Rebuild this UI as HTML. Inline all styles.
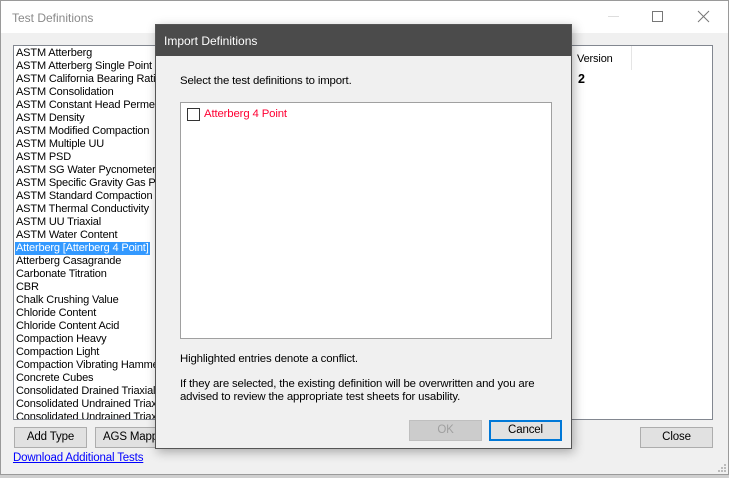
<!DOCTYPE html>
<html><head><meta charset="utf-8"><style>
*{margin:0;padding:0;box-sizing:border-box}
body{width:729px;height:478px;background:#cfcfcf;font-family:"Liberation Sans",sans-serif;font-size:11px;letter-spacing:-0.15px;position:relative;overflow:hidden;color:#000}
.abs{position:absolute}
#win{left:0;top:0;width:729px;height:475px;background:#f0f0f0;border:1px solid #9a9a9a}
#tb{left:0;top:0;width:727px;height:32px;background:#fff}
.btn{position:absolute;background:#e1e1e1;border:1px solid #adadad;text-align:center;line-height:18px;font-size:11.5px}
.list{background:#fff;border:1px solid #828790}
.item{position:absolute;left:2px;white-space:nowrap;line-height:13px;height:13px;font-size:11px}
.dt{font-size:11.4px}
</style></head><body>
<div id="win" class="abs">
 <div id="tb" class="abs"></div>
 <div class="abs" style="left:11px;top:10px;color:#8a8a8a;font-size:12px;letter-spacing:0">Test Definitions</div>
 <div class="abs" style="left:607px;top:15px;width:11px;height:1px;background:#ddd"></div>
 <div class="abs" style="left:651px;top:10px;width:11px;height:11px;border:1px solid #777"></div>
 <svg class="abs" style="left:696px;top:9px" width="13" height="13"><path d="M1 1L12 12M12 1L1 12" stroke="#777" stroke-width="1"/></svg>
 <div class="abs list" style="left:12px;top:44px;width:700px;height:375px"></div>
 <div class="abs" style="left:630px;top:45px;width:1px;height:24px;background:#e5e5e5"></div>
 <div class="abs" style="left:576px;top:52px">Version</div>
 <div class="abs" style="left:577px;top:71px;font-weight:bold;font-size:12.5px">2</div>
 <div class="abs" style="left:13px;top:45px;width:145px;height:373px;overflow:hidden">
  <div class="abs" style="left:1px;top:196px;width:135px;height:13px;background:#3399ff"></div>
  <div style="position:relative">
  <div class="item" style="top:1px">ASTM Atterberg</div>
  <div class="item" style="top:14px">ASTM Atterberg Single Point</div>
  <div class="item" style="top:27px">ASTM California Bearing Ratio</div>
  <div class="item" style="top:40px">ASTM Consolidation</div>
  <div class="item" style="top:53px">ASTM Constant Head Permeability</div>
  <div class="item" style="top:66px">ASTM Density</div>
  <div class="item" style="top:79px">ASTM Modified Compaction</div>
  <div class="item" style="top:92px">ASTM Multiple UU</div>
  <div class="item" style="top:105px">ASTM PSD</div>
  <div class="item" style="top:118px">ASTM SG Water Pycnometer</div>
  <div class="item" style="top:131px">ASTM Specific Gravity Gas Pycnometer</div>
  <div class="item" style="top:144px">ASTM Standard Compaction</div>
  <div class="item" style="top:157px">ASTM Thermal Conductivity</div>
  <div class="item" style="top:170px">ASTM UU Triaxial</div>
  <div class="item" style="top:183px">ASTM Water Content</div>
  <div class="item" style="top:196px;color:#fff">Atterberg [Atterberg 4 Point]</div>
  <div class="item" style="top:209px">Atterberg Casagrande</div>
  <div class="item" style="top:222px">Carbonate Titration</div>
  <div class="item" style="top:235px">CBR</div>
  <div class="item" style="top:248px">Chalk Crushing Value</div>
  <div class="item" style="top:261px">Chloride Content</div>
  <div class="item" style="top:274px">Chloride Content Acid</div>
  <div class="item" style="top:287px">Compaction Heavy</div>
  <div class="item" style="top:300px">Compaction Light</div>
  <div class="item" style="top:313px">Compaction Vibrating Hammer</div>
  <div class="item" style="top:326px">Concrete Cubes</div>
  <div class="item" style="top:339px">Consolidated Drained Triaxial</div>
  <div class="item" style="top:352px">Consolidated Undrained Triaxial</div>
  <div class="item" style="top:365px">Consolidated Undrained Triaxial</div>
  </div>
 </div>
 <div class="btn" style="left:13px;top:426px;width:73px;height:21px">Add Type</div>
 <div class="btn" style="left:94px;top:426px;width:90px;height:21px;text-align:left;padding-left:7px">AGS Mappings</div>
 <div class="btn" style="left:639px;top:426px;width:73px;height:21px">Close</div>
 <div class="abs" style="left:12px;top:451px;color:#0000ff;text-decoration:underline;font-size:11.5px">Download Additional Tests</div>
 <svg class="abs" style="left:716px;top:462px" width="10" height="10" fill="#bbb"><rect x="7" y="1" width="2" height="2"/><rect x="4" y="4" width="2" height="2"/><rect x="7" y="4" width="2" height="2"/><rect x="1" y="7" width="2" height="2"/><rect x="4" y="7" width="2" height="2"/><rect x="7" y="7" width="2" height="2"/></svg>
</div>
<div class="abs" style="left:155px;top:24px;width:417px;height:425px;background:#f0f0f0;border:1px solid #555;box-shadow:2px 3px 10px rgba(0,0,0,0.3)">
 <div class="abs" style="left:0;top:0;width:415px;height:31px;background:#4b4b4b;color:#fff;font-size:12px;letter-spacing:0;padding:9px 0 0 8px">Import Definitions</div>
 <div class="abs dt" style="left:24px;top:50px">Select the test definitions to import.</div>
 <div class="abs list" style="left:24px;top:77px;width:372px;height:237px;border-color:#a0a0a0">
  <div class="abs" style="left:6px;top:5px;width:13px;height:13px;border:1px solid #333;background:#fff"></div>
  <div class="abs dt" style="left:23px;top:5px;color:#ff0033">Atterberg 4 Point</div>
 </div>
 <div class="abs dt" style="left:24px;top:328px">Highlighted entries denote a conflict.</div>
 <div class="abs dt" style="left:24px;top:353px;line-height:13px">If they are selected, the existing definition will be overwritten and you are<br>advised to review the appropriate test sheets for usability.</div>
 <div class="btn" style="left:253px;top:395px;width:73px;height:21px;background:#ccc;border-color:#bfbfbf;color:#a0a0a0">OK</div>
 <div class="btn" style="left:333px;top:395px;width:73px;height:21px;border:2px solid #0078d7;line-height:17px">Cancel</div>
</div>
</body></html>
